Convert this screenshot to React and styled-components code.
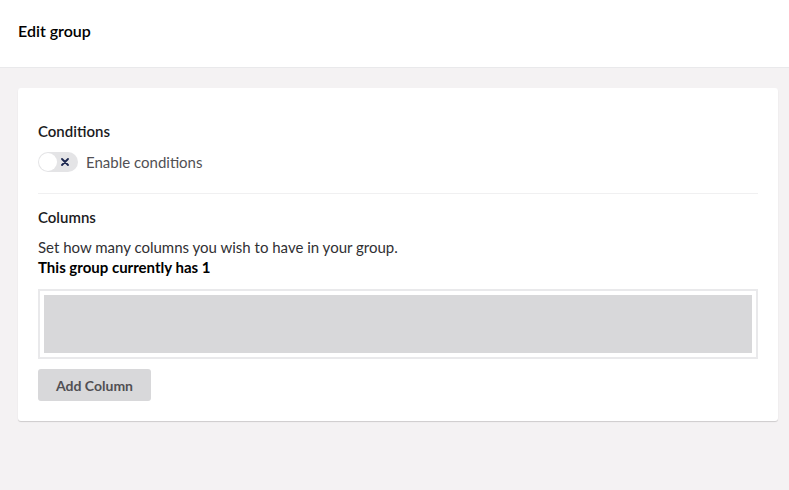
import React from 'react';
import styled, { createGlobalStyle } from 'styled-components';

const GlobalStyle = createGlobalStyle`
    html, body {
        margin: 0;
        padding: 0;
        background: #f4f2f3;
        font-family: Lato, "Open Sans", sans-serif;
        color: #303033;
    }
`;

const Page = styled.div`
    min-height: 490px;
    background: #f4f2f3;
`;

const Header = styled.header`
    height: 68px;
    background: #fff;
    border-bottom: 1px solid #e9e9eb;
    padding: 21px 18px 0;
    box-sizing: border-box;
`;

const Title = styled.h1`
    margin: 0;
    font-size: 16px;
    line-height: 20px;
    font-weight: 600;
    color: #000;
`;

const Body = styled.main`
    padding: 20px 11px 20px 18px;
`;

const Card = styled.section`
    background: #fff;
    border-radius: 3px;
    box-shadow: 0 1px 1px rgba(0, 0, 0, 0.16);
    padding: 33px 20px 20px;
`;

const Section = styled.div`
    padding-bottom: ${p => (p.$divider ? '21px' : '0')};
    border-bottom: ${p => (p.$divider ? '1px solid #f0f0f1' : 'none')};
    margin-bottom: ${p => (p.$divider ? '13px' : '0')};
`;

const Label = styled.div`
    font-size: 15px;
    font-weight: 600;
    line-height: 20px;
    color: #1b1b1d;
    margin-bottom: ${p => p.$gap || '0'};
`;

const ToggleRow = styled.label`
    display: flex;
    align-items: center;
    gap: 8px;
    font-size: 15px;
    color: #515054;
    line-height: 20px;
`;

const Toggle = styled.span`
    position: relative;
    width: 40px;
    height: 20px;
    border-radius: 10px;
    background: #e4e4e6;
    display: inline-block;
    flex: none;
`;

const Knob = styled.span`
    position: absolute;
    top: 1px;
    left: 1px;
    width: 18px;
    height: 18px;
    border-radius: 50%;
    background: #fff;
`;

const Cross = styled.svg`
    position: absolute;
    top: 6px;
    right: 9px;
`;

const Desc = styled.p`
    margin: 0;
    font-size: 15px;
    line-height: 20px;
    color: #303033;
`;

const Strong = styled.p`
    margin: 0 0 12px;
    font-size: 15px;
    line-height: 20px;
    font-weight: 700;
    color: #000;
`;

const ColumnBox = styled.div`
    border: 2px solid #e9e9eb;
    padding: 4px;
`;

const ColumnFill = styled.div`
    height: 58px;
    background: #d8d8da;
`;

const Button = styled.button`
    display: block;
    margin-top: 10px;
    height: 32px;
    padding: 0 18px;
    border: none;
    border-radius: 3px;
    background: #d8d8da;
    color: #515054;
    font-family: Lato, "Open Sans", sans-serif;
    font-size: 14px;
    font-weight: 700;
`;

export default function App() {
    return (
        <Page>
            <GlobalStyle />
            <Header>
                <Title>Edit group</Title>
            </Header>
            <Body>
                <Card>
                    <Section $divider>
                        <Label $gap="11px">Conditions</Label>
                        <ToggleRow>
                            <Toggle>
                                <Knob />
                                <Cross width="8" height="8" viewBox="0 0 8 8">
                                    <path d="M1 1L7 7M7 1L1 7" stroke="#1b264f" strokeWidth="1.8" strokeLinecap="round" />
                                </Cross>
                            </Toggle>
                            Enable conditions
                        </ToggleRow>
                    </Section>
                    <Section>
                        <Label $gap="10px">Columns</Label>
                        <Desc>Set how many columns you wish to have in your group.</Desc>
                        <Strong>This group currently has 1</Strong>
                        <ColumnBox>
                            <ColumnFill />
                        </ColumnBox>
                        <Button>Add Column</Button>
                    </Section>
                </Card>
            </Body>
        </Page>
    );
}
